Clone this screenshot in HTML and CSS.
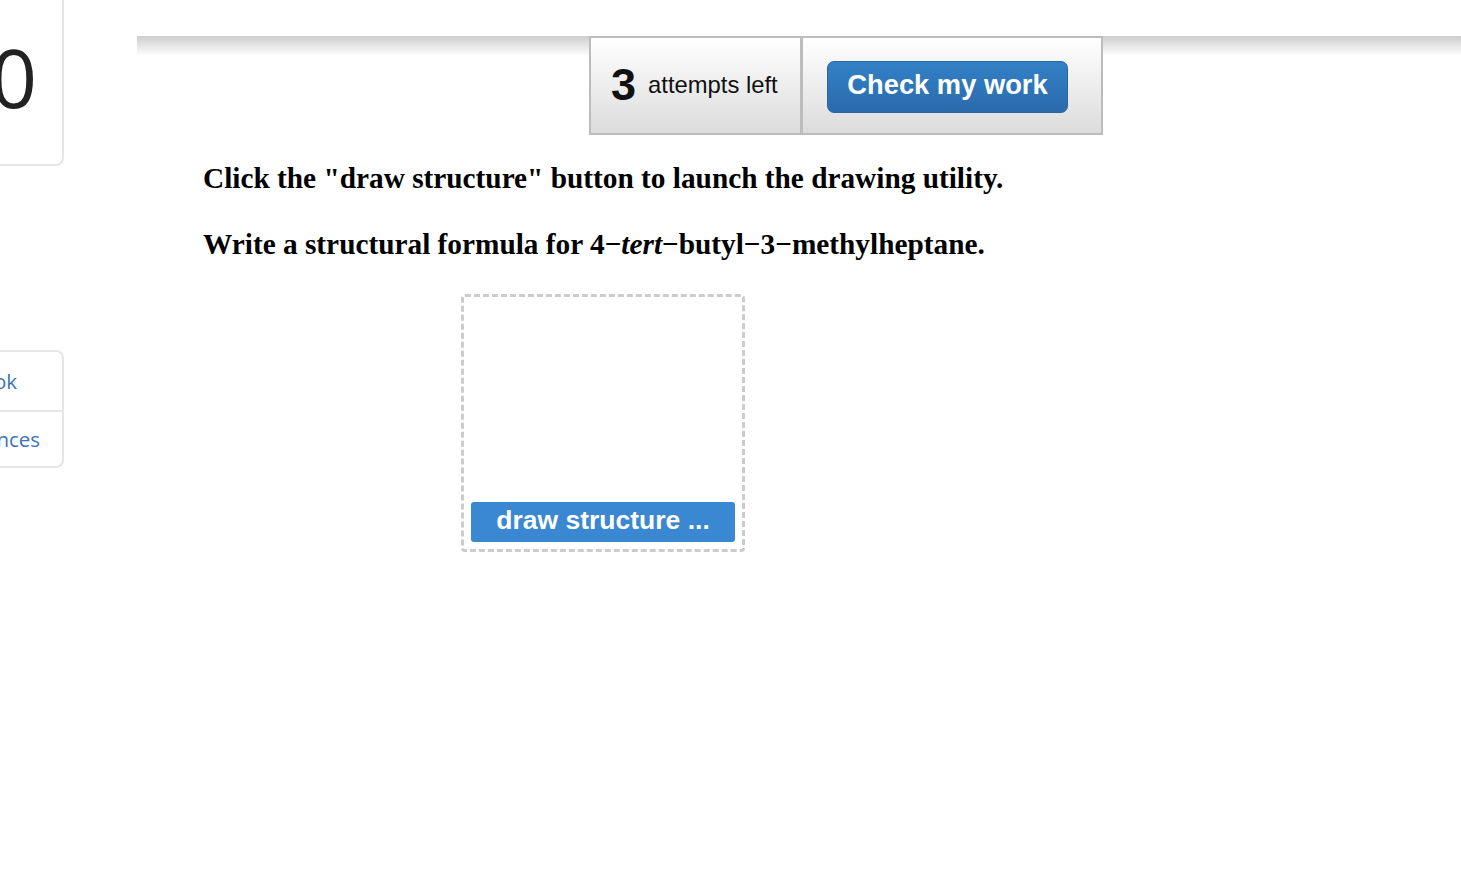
FILE: index.html
```html
<!DOCTYPE html>
<html>
<head>
<meta charset="utf-8">
<link rel="stylesheet" href="styles.css">
</head>
<body>
<div class="page">
  <aside class="sidebar">
    <div class="card score-card"><span class="score">0</span></div>
    <div class="card link-card">
      <div class="link-row"><a class="link">eBook</a></div>
      <div class="link-row"><a class="link">References</a></div>
    </div>
  </aside>
  <main class="main">
    <div class="toolbar">
      <div class="attempts-box">
        <div class="cell attempts"><span class="num">3</span><span class="label">attempts left</span></div>
        <div class="cell check"><button class="check-btn">Check my work</button></div>
      </div>
    </div>
    <div class="question">
      <p class="q-line">Click the "draw structure" button to launch the drawing utility.</p>
      <p class="q-line">Write a structural formula for 4−<i>tert</i>−butyl−3−methylheptane.</p>
      <div class="draw-area">
        <div class="draw-space"></div>
        <button class="draw-btn">draw structure ...</button>
      </div>
    </div>
  </main>
</div>
</body>
</html>
```
FILE: styles.css
```css
html, body {
  margin: 0;
  padding: 0;
  background: #fff;
  overflow: hidden;
}
.page {
  display: flex;
  align-items: flex-start;
  width: 1461px;
  height: 886px;
}
.sidebar {
  width: 200px;
  margin-left: -136px;
  flex: none;
  display: flex;
  flex-direction: column;
  gap: 184px;
  margin-top: -40px;
}
.card {
  border: 2px solid #e6e6e6;
  border-radius: 8px;
  background: #fff;
}
.score-card {
  height: 202px;
  display: flex;
  justify-content: flex-end;
  align-items: flex-start;
  overflow: hidden;
}
.score {
  font-family: "Open Sans", "Liberation Sans", sans-serif;
  font-weight: 400;
  font-size: 81px;
  line-height: 1;
  color: #222;
  margin-top: 74px;
  margin-right: 25px;
}
.link-card {
  overflow: hidden;
  padding-left: 46px;
}
.link-row {
  height: 58px;
  display: flex;
  align-items: center;
  justify-content: center;
}
.link-row + .link-row {
  height: 54px;
  border-top: 2px solid #e6e6e6;
  margin-left: -46px;
  padding-left: 46px;
}
.link {
  font-family: "Open Sans", "Liberation Sans", sans-serif;
  font-size: 20.5px;
  color: #3d72b8;
}
.main {
  flex: 1;
  margin-left: 73px;
  margin-top: 36px;
}
.toolbar {
  height: 99px;
  background: linear-gradient(#cdcdcd, #fff 20px) no-repeat;
  padding-left: 452px;
}
.attempts-box {
  display: flex;
  width: 514px;
  height: 99px;
  box-sizing: border-box;
  border: 2px solid #bcbcbc;
}
.cell {
  background: linear-gradient(#fff, #dcdcdc);
  display: flex;
  align-items: center;
  box-sizing: border-box;
}
.attempts {
  width: 212px;
  border-right: 3px solid #bcbcbc;
  padding-left: 20px;
  gap: 12px;
  font-family: "Liberation Sans", Arial, sans-serif;
  color: #111;
}
.num {
  font-weight: bold;
  font-size: 45px;
  line-height: 1;
  margin-top: -3px;
}
.label {
  font-size: 23.8px;
  margin-top: -2px;
}
.check {
  flex: 1;
  padding-left: 24px;
}
.check-btn {
  width: 241px;
  height: 52px;
  border: 1px solid #2a66a5;
  border-radius: 7px;
  background: linear-gradient(#3380c6, #2a6bad);
  color: #fff;
  font-family: "Liberation Sans", Arial, sans-serif;
  font-weight: bold;
  font-size: 27.3px;
  padding: 0 0 3px 0;
  margin-top: 2px;
}
.question {
  padding-left: 66px;
}
.q-line {
  font-family: "Liberation Serif", "Times New Roman", serif;
  font-weight: bold;
  font-size: 29.3px;
  color: #000;
  margin: 0;
  line-height: 34px;
}
.q-line:first-child {
  margin-top: 26px;
}
.q-line + .q-line {
  margin-top: 32px;
}
.draw-area {
  margin-top: 33px;
  margin-left: 258px;
  width: 284px;
  height: 258px;
  box-sizing: border-box;
  border: 3px dashed #cccccc;
  border-radius: 4px;
  display: flex;
  flex-direction: column;
  justify-content: flex-end;
  padding: 0 7px 7px 7px;
}
.draw-btn {
  height: 40px;
  border: none;
  border-radius: 3px;
  background: #3a87d2;
  color: #fff;
  font-family: "Liberation Sans", Arial, sans-serif;
  font-weight: bold;
  font-size: 26.5px;
  padding: 0 0 3px 0;
}
```
